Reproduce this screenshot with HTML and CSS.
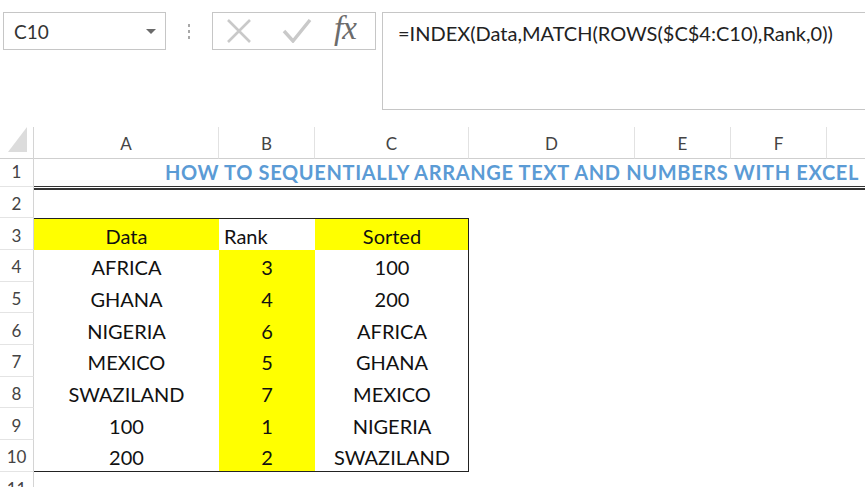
FILE: index.html
```html
<!DOCTYPE html>
<html>
<head>
<meta charset="utf-8">
<link rel="stylesheet" href="styles.css">
</head>
<body>
<div class="topbar">
  <div class="namebox">
    <span class="name">C10</span>
    <svg class="dd" width="10" height="6" viewBox="0 0 10 6"><path d="M0 0H10L5 5Z" fill="#6a6a6a"/></svg>
  </div>
  <div class="dots"><i></i><i></i><i></i></div>
  <div class="fxbox">
    <svg class="ico" width="26" height="24" viewBox="0 0 26 24"><path d="M2 1L24 23M24 1L2 23" stroke="#c9c9c9" stroke-width="2.6" fill="none"/></svg>
    <svg class="ico" width="30" height="24" viewBox="0 0 30 24"><path d="M2 12L11 22L28 1" stroke="#c9c9c9" stroke-width="3.4" fill="none"/></svg>
    <span class="fx">fx</span>
  </div>
  <div class="formula">=INDEX(Data,MATCH(ROWS($C$4:C10),Rank,0))</div>
</div>

<div class="sheet">
  <div class="row head">
    <div class="corner"><svg width="20" height="25" viewBox="0 0 20 25"><path d="M19 0V25H0Z" fill="#dcdcdc"/></svg></div>
    <div class="ch">A</div><div class="ch">B</div><div class="ch">C</div><div class="ch">D</div><div class="ch">E</div><div class="ch">F</div><div class="ch"></div>
  </div>
  <div class="row">
    <div class="rh">1</div>
    <div class="title">HOW TO SEQUENTIALLY ARRANGE TEXT AND NUMBERS WITH EXCEL</div>
  </div>
  <div class="row">
    <div class="rh">2</div>
  </div>
  <div class="row">
    <div class="rh">3</div>
    <div class="c ctr yel bt">Data</div>
    <div class="c lft bt">Rank</div>
    <div class="c ctr yel bt br">Sorted</div>
  </div>
  <div class="row">
    <div class="rh">4</div>
    <div class="c ctr">AFRICA</div><div class="c ctr yel">3</div><div class="c ctr br">100</div>
  </div>
  <div class="row">
    <div class="rh">5</div>
    <div class="c ctr">GHANA</div><div class="c ctr yel">4</div><div class="c ctr br">200</div>
  </div>
  <div class="row">
    <div class="rh">6</div>
    <div class="c ctr">NIGERIA</div><div class="c ctr yel">6</div><div class="c ctr br">AFRICA</div>
  </div>
  <div class="row">
    <div class="rh">7</div>
    <div class="c ctr">MEXICO</div><div class="c ctr yel">5</div><div class="c ctr br">GHANA</div>
  </div>
  <div class="row">
    <div class="rh">8</div>
    <div class="c ctr">SWAZILAND</div><div class="c ctr yel">7</div><div class="c ctr br">MEXICO</div>
  </div>
  <div class="row">
    <div class="rh">9</div>
    <div class="c ctr">100</div><div class="c ctr yel">1</div><div class="c ctr br">NIGERIA</div>
  </div>
  <div class="row">
    <div class="rh">10</div>
    <div class="c ctr bb">200</div><div class="c ctr yel bb">2</div><div class="c ctr br bb brb">SWAZILAND</div>
  </div>
  <div class="row">
    <div class="rh">11</div>
  </div>
</div>
</body>
</html>
```
FILE: styles.css
```css
* { box-sizing: border-box; }
html, body { margin: 0; padding: 0; background: #fff; overflow: hidden; }
body {
  width: 865px;
  height: 487px;
  font-family: Lato, "Open Sans", sans-serif;
  color: #000;
}

.topbar {
  display: flex;
  align-items: flex-start;
  height: 127px;
  padding: 12px 0 0 3px;
}
.namebox {
  width: 163px;
  height: 38px;
  border: 1px solid #c6c6c6;
  display: flex;
  align-items: center;
  justify-content: space-between;
  padding: 0 9px 0 10px;
}
.name { font-size: 19px; color: #333; }
.dd { margin-top: 1px; }
.dots {
  width: 46px;
  height: 38px;
  display: flex;
  flex-direction: column;
  align-items: center;
  justify-content: center;
  gap: 3px;
}
.dots i { display: block; width: 2px; height: 3px; background: #a8a8a8; }
.fxbox {
  width: 164px;
  height: 38px;
  border: 1px solid #c6c6c6;
  display: flex;
  align-items: center;
  padding: 0 0 0 13px;
}
.fxbox .ico:first-child { margin-right: 30px; }
.fxbox .ico:nth-child(2) { margin-right: 22px; }
.fx {
  font-family: "Liberation Serif", "DejaVu Serif", serif;
  font-style: italic;
  font-size: 33px;
  color: #6c6c6c;
  letter-spacing: -1px;
  margin-top: -5px;
}
.formula {
  margin-left: 6px;
  flex: 1;
  height: 98px;
  border: 1px solid #c6c6c6;
  border-right: none;
  padding: 8px 0 0 15px;
  font-size: 20px;
  color: #222;
  white-space: nowrap;
}

.sheet { display: flex; flex-direction: column; }
.row {
  display: grid;
  grid-template-columns: 34px 185px 96px 154px 166px 96px 96px 38px;
  height: 31.67px;
  flex: none;
}
.row.head { height: 28px; }
.corner {
  border-right: 1px solid #d4d4d4;
  border-bottom: 1px solid #cfcfcf;
  display: flex;
  align-items: flex-end;
  justify-content: flex-end;
  padding: 0 5px 6px 0;
}
.ch {
  border-right: 1px solid #e2e2e2;
  border-bottom: 1px solid #cfcfcf;
  display: flex;
  align-items: center;
  justify-content: center;
  font-size: 17px;
  color: #444;
  padding-top: 1px;
}
.ch:last-child { border-right: none; }
.rh {
  grid-column: 1;
  border-right: 1px solid #d4d4d4;
  border-bottom: 1px solid #e4e4e4;
  display: flex;
  align-items: center;
  justify-content: center;
  font-size: 17px;
  color: #444;
  padding-top: 3px;
}
.title {
  grid-column: 2 / 9;
  padding: 3px 6px 0 0;
  font-weight: bold;
  font-size: 20px;
  letter-spacing: 0.65px;
  color: #5b9bd5;
  display: flex;
  align-items: center;
  justify-content: flex-end;
  white-space: nowrap;
  box-shadow: inset 0 -1px 0 #333, 0 1px 0 #fff, 0 3px 0 #333;
}
.c {
  display: flex;
  align-items: center;
  font-size: 20px;
  color: #111;
  white-space: nowrap;
  padding-top: 3px;
}
.ctr { justify-content: center; }
.lft { justify-content: flex-start; padding-left: 5px; }
.yel { background: #ffff00; }
.bt { box-shadow: inset 0 1px 0 #222; }
.br { box-shadow: inset -1px 0 0 #222; }
.bt.br { box-shadow: inset 0 1px 0 #222, inset -1px 0 0 #222; }
.bb { box-shadow: inset 0 -1px 0 #222; }
.br.bb { box-shadow: inset 0 -1px 0 #222, inset -1px 0 0 #222; }
```
